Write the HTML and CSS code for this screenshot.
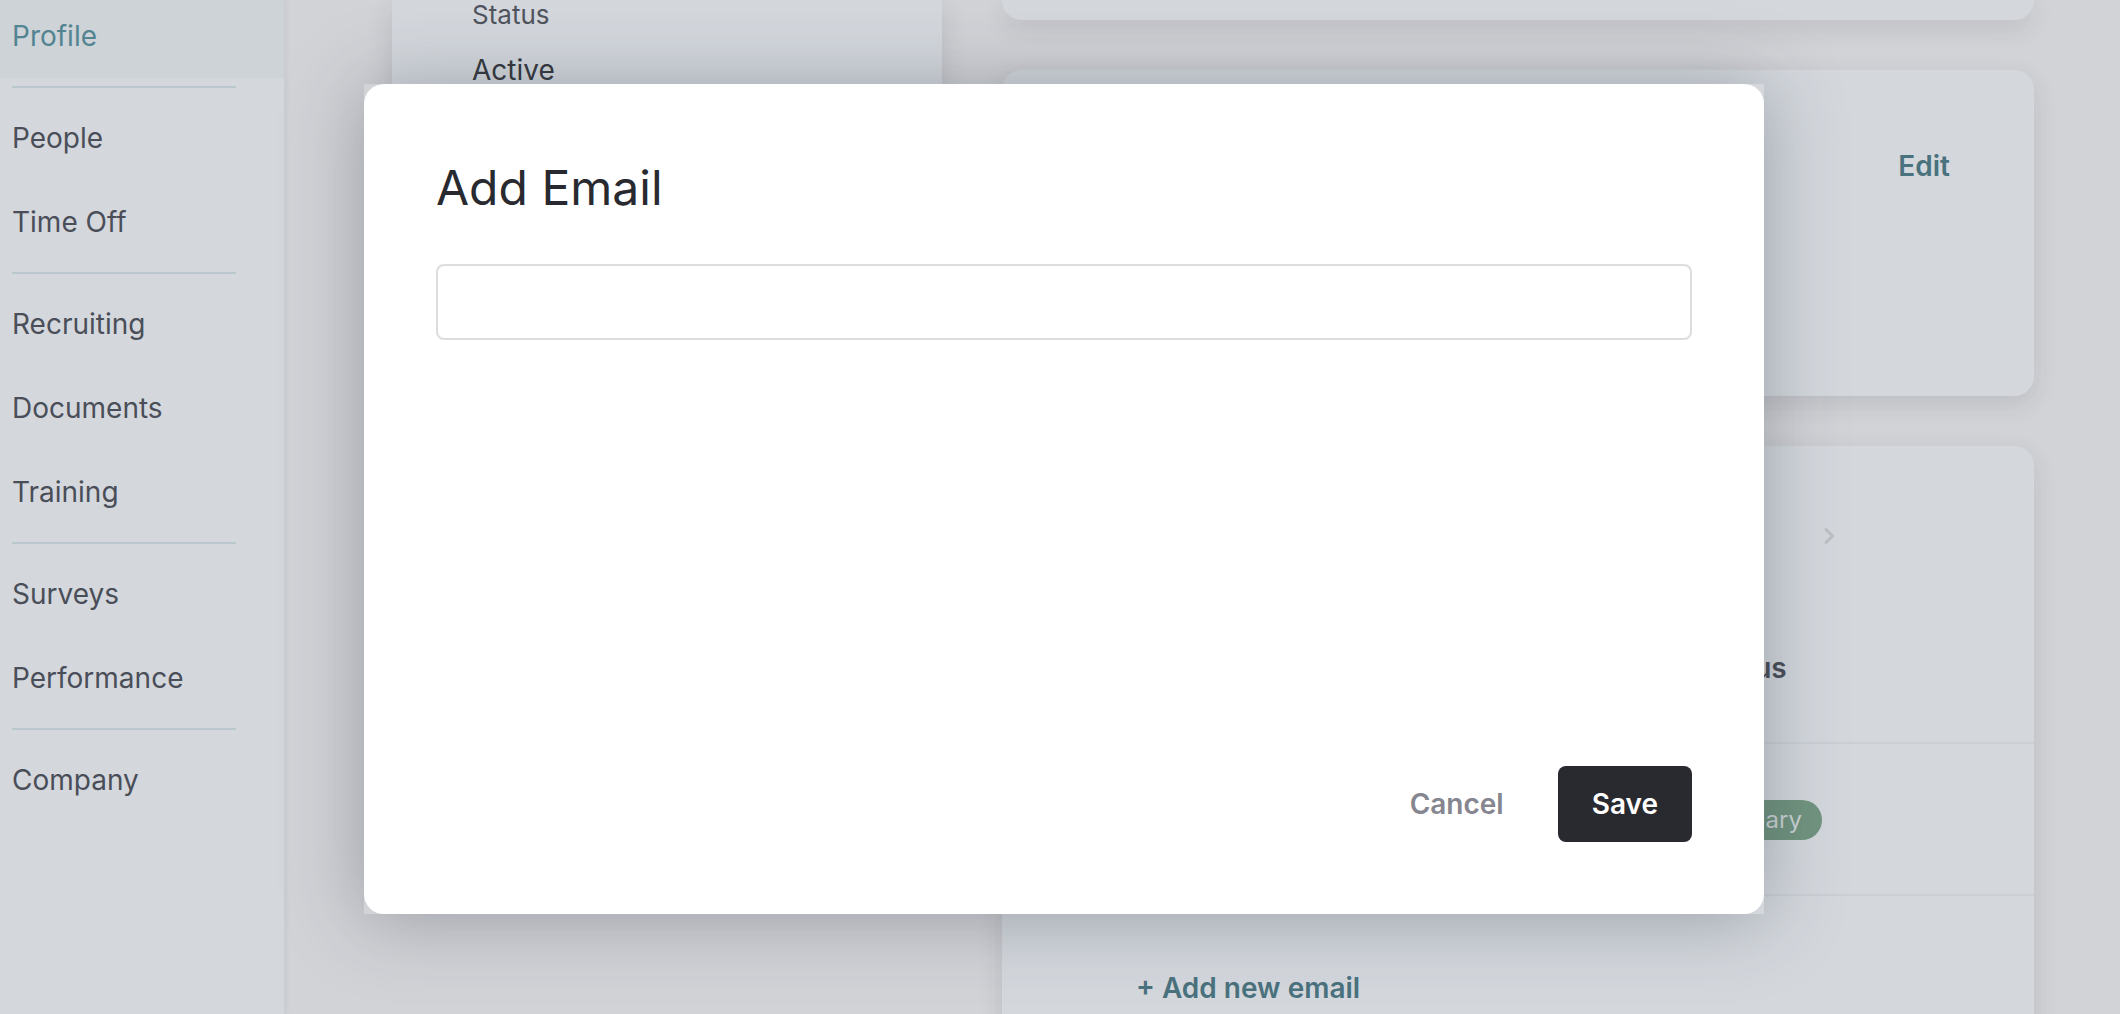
FILE: index.html
```html
<!DOCTYPE html>
<html lang="en">
<head>
  <meta charset="utf-8">
  <meta name="viewport" content="width=device-width, initial-scale=1">
  <title>Add Email</title>
  <link rel="stylesheet" href="styles.css">
</head>
<body>
  <div class="app">
    <nav class="sidebar">
      <a class="nav-link nav-link-active" href="#">Profile</a>
      <hr class="nav-divider">
      <a class="nav-link" href="#">People</a>
      <a class="nav-link" href="#">Time Off</a>
      <hr class="nav-divider">
      <a class="nav-link" href="#">Recruiting</a>
      <a class="nav-link" href="#">Documents</a>
      <a class="nav-link" href="#">Training</a>
      <hr class="nav-divider">
      <a class="nav-link" href="#">Surveys</a>
      <a class="nav-link" href="#">Performance</a>
      <hr class="nav-divider">
      <a class="nav-link" href="#">Company</a>
    </nav>

    <main class="content">
      <dl class="summary">
        <dt class="summary-label">Status</dt>
        <dd class="summary-value">Active</dd>
      </dl>

      <div class="cards">
        <section class="card card-cut"></section>
        <section class="card card-details">
          <button class="text-button" type="button">Edit</button>
        </section>
        <section class="card">
          <div class="pager">
            <button class="pager-button" type="button" aria-label="Next">
              <svg class="chevron" viewBox="0 0 10 16" aria-hidden="true"><path d="M2 1.500l6.500 6.500-6.500 6.500"/></svg>
            </button>
          </div>
          <table class="emails">
            <thead>
              <tr><td class="emails-head"></td><th class="emails-head emails-status" scope="col">Status</th></tr>
            </thead>
            <tbody>
              <tr><td class="emails-cell"></td><td class="emails-cell"><span class="badge">Primary</span></td></tr>
            </tbody>
          </table>
          <div class="card-footer">
            <button class="text-button" type="button">+ Add new email</button>
          </div>
        </section>
      </div>
    </main>
  </div>

  <div class="overlay">
    <div class="dialog-frame">
      <form class="dialog" role="dialog" aria-modal="true" aria-labelledby="dialog-title">
        <h1 class="dialog-title" id="dialog-title"><label for="email">Add Email</label></h1>
        <input class="dialog-input" id="email" type="email">
        <div class="dialog-actions">
          <button class="cancel-button" type="button">Cancel</button>
          <button class="save-button" type="submit">Save</button>
        </div>
      </form>
    </div>
  </div>
</body>
</html>
```

FILE: styles.css
```css
* {
  box-sizing: border-box;
}

body {
  margin: 0;
  height: 100vh;
  overflow: hidden;
  background: #d2d3d7;
  color: #4a4e58;
  font: 400 28px/40px Inter, "Liberation Sans", sans-serif;
}

button,
input {
  font: inherit;
}

button {
  padding: 0;
  border: 0;
  background: none;
  cursor: pointer;
}

.app {
  display: flex;
  height: 100vh;
  overflow: hidden;
}

/* Sidebar */

.sidebar {
  flex: 0 0 284px;
  background: #d4d8dd;
  box-shadow: 0 0 8px rgba(40, 40, 50, 0.08);
}

.nav-link {
  display: block;
  padding: 22px 12px;
  color: #4a4e58;
  text-decoration: none;
}

.nav-link-active {
  padding-top: 16px;
  background: #ced3d8;
  color: #538491;
}

.nav-divider {
  height: 2px;
  margin: 8px 48px 8px 12px;
  border: 0;
  background: #bac7cd;
}

/* Page content */

.content {
  display: flex;
  flex: 1;
  align-items: flex-start;
  gap: 60px;
  padding: 0 86px 0 108px;
}

.summary {
  flex: 0 0 550px;
  height: 400px;
  margin: 0;
  padding: 0 80px;
  background: #d4d8dd;
  box-shadow: 0 8px 24px rgba(40, 40, 50, 0.12);
}

.summary-label {
  padding-bottom: 16px;
  color: #50545e;
  font-size: 26px;
  line-height: 30px;
}

.summary-value {
  margin: 0;
  padding: 4px 0;
  color: #35383f;
}

.cards {
  display: flex;
  flex: 1;
  flex-direction: column;
  gap: 50px;
}

.card {
  border-radius: 20px;
  background: #d4d8dd;
  box-shadow: 0 8px 24px rgba(40, 40, 50, 0.12);
}

.card-cut {
  height: 20px;
  border-radius: 0 0 20px 20px;
}

.card-details {
  min-height: 326px;
  padding: 76px 84px;
  text-align: right;
}

.text-button {
  color: #4a727e;
  font-weight: 600;
}

.pager {
  display: flex;
  align-items: center;
  justify-content: flex-end;
  height: 180px;
  padding: 0 200px;
}

.pager-button {
  display: flex;
}

.chevron {
  width: 10px;
  height: 16px;
  overflow: visible;
  fill: none;
  stroke: #bcc0c5;
  stroke-width: 3;
  stroke-linecap: round;
  stroke-linejoin: round;
}

.emails {
  width: 100%;
  border-spacing: 0;
}

.emails-head {
  padding: 22px 0 54px;
  border-bottom: 2px solid #cbcfd5;
  color: #4a4e58;
  font-weight: 600;
  text-align: left;
}

.emails-status {
  width: 340px;
  padding-left: 6px;
}

.emails-cell {
  padding: 56px 0 54px;
  border-bottom: 2px solid #cbcfd5;
}

.badge {
  display: block;
  width: max-content;
  padding: 0 20px;
  border-radius: 20px;
  background: #71947f;
  color: #cbd3d5;
  font-size: 24px;
}

.card-footer {
  padding: 72px 134px;
}

/* Dialog */

.overlay {
  position: fixed;
  inset: 0;
  display: flex;
  padding: 84px 356px 100px 364px;
}

.dialog-frame {
  display: flex;
  flex: 1;
  box-shadow: 0 4px 72px rgba(40, 50, 65, 0.34);
}

.dialog {
  display: flex;
  flex: 1;
  flex-direction: column;
  padding: 72px;
  border-radius: 20px;
  background: #fff;
}

.dialog-title {
  margin: 0 0 44px;
  color: #292a30;
  font-size: 48px;
  font-weight: 400;
  line-height: 64px;
}

.dialog-input {
  height: 76px;
  padding: 0 24px;
  border: 2px solid #ddd;
  border-radius: 8px;
  background: #fff;
  color: #292a30;
}

.dialog-actions {
  display: flex;
  align-items: center;
  justify-content: flex-end;
  gap: 54px;
  margin-top: auto;
}

.cancel-button {
  color: #85868f;
  font-weight: 600;
}

.save-button {
  height: 76px;
  padding: 0 34px;
  border-radius: 8px;
  background: #292a30;
  color: #fff;
  font-weight: 600;
}
```
